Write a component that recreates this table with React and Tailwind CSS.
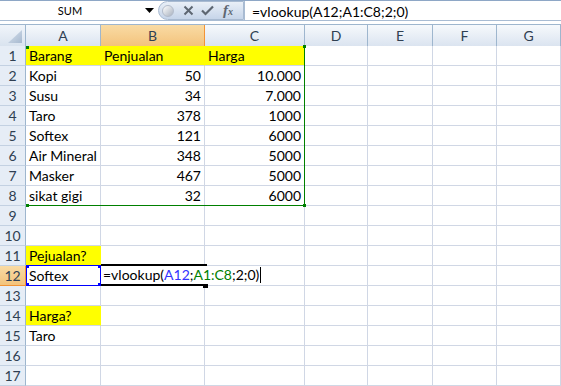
import React from 'react';

const cols = ['A', 'B', 'C', 'D', 'E', 'F', 'G'];

const rows = [
  ['Barang', 'Penjualan', 'Harga'],
  ['Kopi', '50', '10.000'],
  ['Susu', '34', '7.000'],
  ['Taro', '378', '1000'],
  ['Softex', '121', '6000'],
  ['Air Mineral', '348', '5000'],
  ['Masker', '467', '5000'],
  ['sikat gigi', '32', '6000'],
  [],
  [],
  ['Pejualan?'],
  ['Softex'],
  [],
  ['Harga?'],
  ['Taro'],
  [],
  [],
];

const yellowCells = { '1-0': true, '1-1': true, '1-2': true, '11-0': true, '14-0': true };

function Handle({ pos, color }) {
  return <span className={`absolute w-[3px] h-[3px] ${pos} ${color}`} />;
}

function FormulaText() {
  return (
    <>
      <span>=vlookup(</span>
      <span className="text-[#3333ff]">A12</span>
      <span>;</span>
      <span className="text-[#008000]">A1:C8</span>
      <span>;2;0)</span>
    </>
  );
}

function Cell({ value, yellow, right, mode }) {
  return (
    <div
      className={`relative h-[20px] border-b border-[#d0d7e5] px-[3px] leading-[20px] whitespace-nowrap flex ${
        yellow ? 'bg-[#ffff00] border-r border-r-[#ffff00]' : 'bg-white border-r'
      } ${right ? 'justify-end' : 'justify-start'}`}
    >
      {value}
      {mode === 'ref' && (
        <span className="absolute left-0 top-[-1px] w-[75px] h-[21px] border border-[#0000ff]">
          <Handle pos="left-[-1px] top-[-1px]" color="bg-[#0000ff]" />
          <Handle pos="right-[-1px] top-[-1px]" color="bg-[#0000ff]" />
          <Handle pos="left-[-1px] bottom-[-1px]" color="bg-[#0000ff]" />
          <Handle pos="right-[-1px] bottom-[-1px]" color="bg-[#0000ff]" />
        </span>
      )}
      {mode === 'edit' && (
        <span className="absolute left-0 top-[-2px] z-10 flex flex-col">
          <span className="w-[106px] h-[2px] bg-black" />
          <span className="h-[18px] self-start bg-white px-[2px] flex items-center leading-[18px]">
            <FormulaText />
            <span className="ml-[1px] inline-block w-[1px] h-[16px] bg-black" />
          </span>
          <span className="flex items-start">
            <span className="w-[102px] h-[2px] bg-black" />
            <span className="w-[5px] h-[4px] bg-black" />
          </span>
        </span>
      )}
    </div>
  );
}

export default function App() {
  return (
    <div className="w-[561px] h-[386px] overflow-hidden bg-white font-[Lato,sans-serif] text-[14px] text-black select-none">
      {/* formula bar */}
      <div className="h-[21px] flex border-t border-[#8ea7c6] border-b border-b-[#a9bcd3] bg-white">
        <div className="w-[140px] text-center text-[11px] leading-[19px] text-black">SUM</div>
        <div className="w-[18px] flex items-center justify-center">
          <svg width="9" height="5" viewBox="0 0 9 5">
            <path d="M0 0 H9 L4.5 5 Z" fill="#000" />
          </svg>
        </div>
        <div className="w-[86px] h-[19px] flex items-center rounded-l-full border border-[#a8bad1] bg-gradient-to-b from-[#e9eff7] to-[#c6d5e9]">
          <div className="ml-[3px] w-[12px] h-[12px] rounded-full bg-gradient-to-br from-[#ffffff] to-[#a9b2bf] border border-[#b3bccb]" />
          <div className="ml-[9px] flex items-center">
            <svg width="11" height="11" viewBox="0 0 11 11">
              <path d="M1.5 1.5 L9.5 9.5 M9.5 1.5 L1.5 9.5" stroke="#5d6671" strokeWidth="2" />
            </svg>
          </div>
          <div className="ml-[7px] flex items-center">
            <svg width="13" height="11" viewBox="0 0 13 11">
              <path d="M1 5.5 L4.5 9 L12 1.5" stroke="#5d6671" strokeWidth="2.2" fill="none" />
            </svg>
          </div>
          <div className="ml-[9px] font-['Liberation_Serif',serif] italic font-bold text-[#5d6671] leading-[19px]">
            <span className="text-[15px]">f</span>
            <span className="text-[10px]">x</span>
          </div>
        </div>
        <div className="flex-1 border-l border-[#a9bcd3] pl-[7px] leading-[19px] pt-[1px] whitespace-nowrap">
          =vlookup(A12;A1:C8;2;0)
        </div>
      </div>
      <div className="h-[3px] bg-white" />

      {/* column headers */}
      <div className="grid grid-cols-[26px_75px_104px_100px_63px_65px_64px_64px] h-[22px] border-t border-[#9eb6ce]">
        <div className="flex items-end justify-end pr-[3px] pb-[3px] border-r border-b border-[#9eb6ce] bg-gradient-to-b from-[#f1f5fa] to-[#d9e3ef]">
          <svg width="14" height="13" viewBox="0 0 14 13">
            <defs>
              <linearGradient id="tri" x1="0" y1="0" x2="1" y2="1">
                <stop offset="0" stopColor="#d8e2ee" />
                <stop offset="1" stopColor="#a7b9cf" />
              </linearGradient>
            </defs>
            <path d="M14 0 L14 13 L0 13 Z" fill="url(#tri)" />
          </svg>
        </div>
        {cols.map((c) =>
          c === 'B' ? (
            <div
              key={c}
              className="border-r border-b border-[#f29436] bg-gradient-to-b from-[#f9dba4] to-[#f3c37c] text-center leading-[20px] pt-[1px] text-[#2f3f52]"
            >
              {c}
            </div>
          ) : (
            <div
              key={c}
              className="border-r border-b border-[#9eb6ce] bg-gradient-to-b from-[#f6f9fc] to-[#dbe4f0] text-center leading-[20px] pt-[1px] text-[#2f3f52]"
            >
              {c}
            </div>
          )
        )}
      </div>

      {/* sheet body */}
      <div className="relative grid grid-cols-[26px_75px_104px_100px_63px_65px_64px_64px]">
        {rows.map((r, i) => {
          const n = i + 1;
          return (
            <React.Fragment key={n}>
              {n === 12 ? (
                <div className="h-[20px] border-r border-b border-[#f29436] bg-gradient-to-b from-[#f9dba4] to-[#f3c37c] text-center leading-[20px] text-[#2f3f52]">
                  {n}
                </div>
              ) : (
                <div className="h-[20px] border-r border-r-[#9eb6ce] border-b border-b-[#c3d1e2] bg-[#e6edf6] text-center leading-[20px] text-[#2f3f52]">
                  {n}
                </div>
              )}
              {cols.map((c, j) => (
                <Cell
                  key={c}
                  value={r[j] || ''}
                  yellow={yellowCells[`${n}-${j}`]}
                  right={n >= 2 && n <= 8 && j > 0}
                  mode={n === 12 && j === 0 ? 'ref' : n === 12 && j === 1 ? 'edit' : null}
                />
              ))}
            </React.Fragment>
          );
        })}

        {/* range A1:C8 highlight */}
        <div className="absolute left-[26px] top-0 w-[279px] h-[160px] border-r border-b border-[#008000] pointer-events-none">
          <Handle pos="left-0 top-0" color="bg-[#008000]" />
          <Handle pos="right-[-2px] top-[-1px]" color="bg-[#008000]" />
          <Handle pos="left-0 bottom-[-2px]" color="bg-[#008000]" />
          <Handle pos="right-[-2px] bottom-[-2px]" color="bg-[#008000]" />
        </div>
      </div>
    </div>
  );
}
